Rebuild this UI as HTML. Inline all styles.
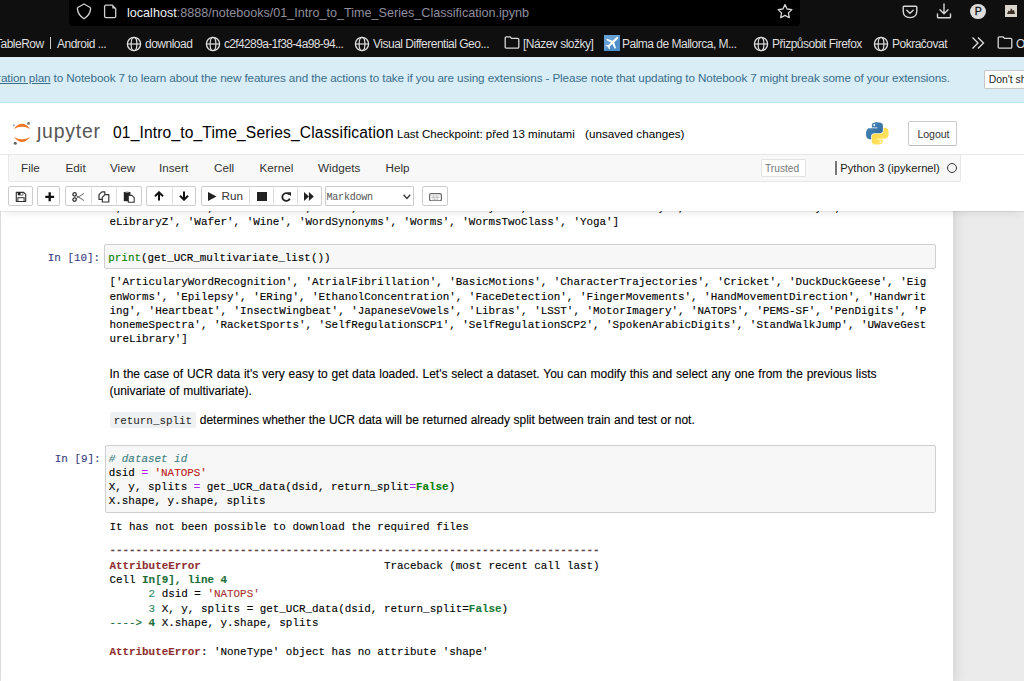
<!DOCTYPE html>
<html><head><meta charset="utf-8">
<style>
*{box-sizing:border-box;margin:0;padding:0}
html,body{width:1024px;height:681px;overflow:hidden;background:#ebebeb;font-family:"Liberation Sans",sans-serif}
.abs{position:absolute}
#chrome{position:absolute;left:0;top:0;width:1024px;height:57px;background:#0f0f0f}
#urlbar{position:absolute;left:69px;top:0;width:731px;height:26px;background:#000;border-radius:0 0 4px 4px}
.bm{position:absolute;top:35.8px;color:#dedede;font-size:12px;white-space:nowrap;line-height:16px;letter-spacing:-0.5px}
#notif{position:absolute;left:0;top:57px;width:1024px;height:46px;background:#d9edf7;border-bottom:1px solid #bce8f1;color:#31708f;font-size:11.7px}
#header{position:absolute;left:0;top:103px;width:1024px;height:108px;background:#fff;box-shadow:0 1px 0 rgba(0,0,0,0.05),0 5px 8px -4px rgba(87,87,87,0.16);z-index:5}
#site{position:absolute;left:0;top:103px;width:1024px;height:578px;background:#ebebeb;overflow:hidden}
#nbc{position:absolute;left:1px;top:0;width:952px;height:578px;background:#fff;box-shadow:0 0 12px 1px rgba(87,87,87,0.2)}
#content{position:absolute;left:0;top:0;width:1024px;height:681px}
.mono{font-family:"Liberation Mono",monospace;font-size:10.9px;line-height:14.3px;white-space:pre;color:#000}
.t{position:absolute;white-space:nowrap}
.inbox{border:1px solid #cfcfcf;border-radius:2px;background:#f7f7f7}
.prompt{color:#363d80}
.cm-b{color:#008000}.cm-k{color:#008000;font-weight:bold}.cm-c{color:#408080;font-style:italic}.cm-s{color:#ba2121}.cm-o{color:#aa22ff}
.a-s{color:#a8322f}.a-k{color:#1a7a36;font-weight:bold}
.a-r{color:#8e2f2f;font-weight:bold}.a-d{color:#5e4242;font-weight:bold;position:relative;top:-1.5px}.a-g{color:#1a6e36;font-weight:bold}.a-g2{color:#2a8a60}
.t.mono{white-space:pre;-webkit-text-stroke:0.12px currentColor}
.md{font-size:12px;line-height:16.5px;color:#000;word-spacing:0.5px;-webkit-text-stroke:0.1px #000}

.btn{position:absolute;top:83px;height:20px;border:1px solid #ccc;border-radius:2px;background:#fff}
.sep{position:absolute;top:83px;width:1px;height:20px;background:#ddd}
.menu{top:58px;font-size:11.7px;line-height:14px;color:#333}
</style></head>
<body>
<div id="chrome">
  <div id="urlbar"></div>
  <svg class="abs" style="left:76px;top:3px" width="16" height="17" viewBox="0 0 16 17"><path d="M8 1 L13.8 4.2 Q14.6 4.7 14.6 5.6 Q14.3 11.5 8 15.8 Q1.7 11.5 1.4 5.6 Q1.4 4.7 2.2 4.2 Z" fill="none" stroke="#d0d0d0" stroke-width="1.3" stroke-linejoin="round"/></svg>
  <svg class="abs" style="left:103px;top:4px" width="15" height="15" viewBox="0 0 15 15"><path d="M3 1.2 L9.3 1.2 L12.7 4.6 L12.7 12.2 Q12.7 13.6 11.3 13.6 L3 13.6 Q1.6 13.6 1.6 12.2 L1.6 2.6 Q1.6 1.2 3 1.2 Z" fill="none" stroke="#d0d0d0" stroke-width="1.3" stroke-linejoin="round"/><path d="M9.3 1.2 L9.3 4.6 L12.7 4.6 Z" fill="#d0d0d0"/></svg>
  <div class="t" id="url" style="left:127px;top:3.7px;font-size:12.6px;line-height:18px;color:#8f8f9d"><span style="color:#f0f0f4">localhost</span>:8888/notebooks/01_Intro_to_Time_Series_Classification.ipynb</div>
  <svg class="abs" style="left:776px;top:3px" width="18" height="17" viewBox="0 0 18 17"><path d="M9 1.6 L11.1 6 L15.9 6.6 L12.4 9.9 L13.3 14.7 L9 12.4 L4.7 14.7 L5.6 9.9 L2.1 6.6 L6.9 6 Z" fill="none" stroke="#d8d8d8" stroke-width="1.3" stroke-linejoin="round"/></svg>
  <svg class="abs" style="left:902px;top:5px" width="16" height="14" viewBox="0 0 16 14"><path d="M2.2 1.2 L13.8 1.2 Q14.8 1.2 14.8 2.2 L14.8 6 Q14.8 12.6 8 12.6 Q1.2 12.6 1.2 6 L1.2 2.2 Q1.2 1.2 2.2 1.2 Z" fill="none" stroke="#d8d8d8" stroke-width="1.4"/><path d="M4.8 5.3 L8 8.3 L11.2 5.3" fill="none" stroke="#d8d8d8" stroke-width="1.4" stroke-linecap="round" stroke-linejoin="round"/></svg>
  <svg class="abs" style="left:936px;top:3px" width="16" height="16" viewBox="0 0 16 16"><path d="M8 1 L8 10.5 M4 6.8 L8 10.8 L12 6.8" fill="none" stroke="#d8d8d8" stroke-width="1.4" stroke-linecap="round" stroke-linejoin="round"/><path d="M1.5 11 L1.5 14 Q1.5 14.8 2.3 14.8 L13.7 14.8 Q14.5 14.8 14.5 14 L14.5 11" fill="none" stroke="#d8d8d8" stroke-width="1.4" stroke-linecap="round"/></svg>
  <div class="abs" style="left:970px;top:3.5px;width:15.5px;height:15.5px;border-radius:50%;background:#dcdcdc"></div>
  <div class="t" style="left:970.5px;top:4px;width:15.5px;text-align:center;font-size:10.5px;line-height:15.5px;color:#111;-webkit-text-stroke:0.3px #111">P</div>
  <div class="abs" style="left:1005px;top:5px;width:12px;height:12px;background:#d9d4cc"></div>
  <svg class="abs" style="left:1005px;top:5px" width="12" height="12" viewBox="0 0 12 12"><path d="M2 9 L3.5 5.5 L5 6.5 L6 3 L7.5 5.5 L9 5 L10 9 Z" fill="#3a2d24"/></svg>
<div class="bm" style="left:-5px" id="bm0">TableRow</div>
<div class="abs" style="left:49.5px;top:37px;width:1.2px;height:12px;background:#cfcfcf"></div>
<div class="bm" id="bm1" style="left:57px">Android ...</div>
<svg class="abs" style="left:126px;top:35.5px" width="16" height="16" viewBox="0 0 16 16"><circle cx="8" cy="8" r="6.6" fill="none" stroke="#e0e0e0" stroke-width="1.3"/><ellipse cx="8" cy="8" rx="2.9" ry="6.6" fill="none" stroke="#e0e0e0" stroke-width="1.2"/><path d="M1.5 8 L14.5 8" stroke="#e0e0e0" stroke-width="1.2"/></svg><div class="bm" id="bm2" style="left:145px">download</div>
<svg class="abs" style="left:205px;top:35.5px" width="16" height="16" viewBox="0 0 16 16"><circle cx="8" cy="8" r="6.6" fill="none" stroke="#e0e0e0" stroke-width="1.3"/><ellipse cx="8" cy="8" rx="2.9" ry="6.6" fill="none" stroke="#e0e0e0" stroke-width="1.2"/><path d="M1.5 8 L14.5 8" stroke="#e0e0e0" stroke-width="1.2"/></svg><div class="bm" id="bm3" style="left:224px;letter-spacing:-0.65px">c2f4289a-1f38-4a98-94...</div>
<svg class="abs" style="left:354px;top:35.5px" width="16" height="16" viewBox="0 0 16 16"><circle cx="8" cy="8" r="6.6" fill="none" stroke="#e0e0e0" stroke-width="1.3"/><ellipse cx="8" cy="8" rx="2.9" ry="6.6" fill="none" stroke="#e0e0e0" stroke-width="1.2"/><path d="M1.5 8 L14.5 8" stroke="#e0e0e0" stroke-width="1.2"/></svg><div class="bm" id="bm4" style="left:373px">Visual Differential Geo...</div>
<svg class="abs" style="left:504px;top:35px" width="16" height="15" viewBox="0 0 16 15"><path d="M1.2 3 Q1.2 1.8 2.4 1.8 L6 1.8 L7.5 3.4 L13.6 3.4 Q14.8 3.4 14.8 4.6 L14.8 12 Q14.8 13.2 13.6 13.2 L2.4 13.2 Q1.2 13.2 1.2 12 Z" fill="none" stroke="#d8d8d8" stroke-width="1.3" stroke-linejoin="round"/></svg><div class="bm" id="bm5" style="left:523px">[Název složky]</div>
<svg class="abs" style="left:603.5px;top:34.5px" width="16" height="16" viewBox="0 0 16 16"><rect x="0" y="0" width="16" height="16" fill="#4f8fc9"/><path d="M0 0 L16 0 L0 16 Z" fill="#7ab2e0" opacity="0.5"/><path d="M13.5 2 Q15 2.2 14 3.8 L10.2 7.4 L12 13 L10.8 13.8 L8.3 9 L5.6 11.4 L6 13.5 L5 14.2 L3.9 11.8 L1.6 10.8 L2.3 9.9 L4.4 10.2 L7 7.6 L2.2 5 L3 3.8 L8.6 5.8 L12.2 2.4 Q12.8 1.8 13.5 2 Z" fill="#fff"/></svg><div class="bm" id="bm6" style="left:622px">Palma de Mallorca, M...</div>
<svg class="abs" style="left:753px;top:35.5px" width="16" height="16" viewBox="0 0 16 16"><circle cx="8" cy="8" r="6.6" fill="none" stroke="#e0e0e0" stroke-width="1.3"/><ellipse cx="8" cy="8" rx="2.9" ry="6.6" fill="none" stroke="#e0e0e0" stroke-width="1.2"/><path d="M1.5 8 L14.5 8" stroke="#e0e0e0" stroke-width="1.2"/></svg><div class="bm" id="bm7" style="left:772px">Přizpůsobit Firefox</div>
<svg class="abs" style="left:873px;top:35.5px" width="16" height="16" viewBox="0 0 16 16"><circle cx="8" cy="8" r="6.6" fill="none" stroke="#e0e0e0" stroke-width="1.3"/><ellipse cx="8" cy="8" rx="2.9" ry="6.6" fill="none" stroke="#e0e0e0" stroke-width="1.2"/><path d="M1.5 8 L14.5 8" stroke="#e0e0e0" stroke-width="1.2"/></svg><div class="bm" id="bm8" style="left:892px">Pokračovat</div>
<svg class="abs" style="left:970px;top:36px" width="16" height="14" viewBox="0 0 16 14"><path d="M2.5 1.5 L8 7 L2.5 12.5 M8 1.5 L13.5 7 L8 12.5" fill="none" stroke="#e0e0e0" stroke-width="1.3"/></svg><svg class="abs" style="left:997px;top:35px" width="16" height="15" viewBox="0 0 16 15"><path d="M1.2 3 Q1.2 1.8 2.4 1.8 L6 1.8 L7.5 3.4 L13.6 3.4 Q14.8 3.4 14.8 4.6 L14.8 12 Q14.8 13.2 13.6 13.2 L2.4 13.2 Q1.2 13.2 1.2 12 Z" fill="none" stroke="#d8d8d8" stroke-width="1.3" stroke-linejoin="round"/></svg><div class="bm" id="bm9" style="left:1016px">O</div>
</div>
<div id="notif">
  <div class="t" id="ntext" style="right:74px;top:14px;line-height:14px;letter-spacing:-0.112px;color:#3a6f8c"><span style="text-decoration:underline">migration plan</span> to Notebook 7 to learn about the new features and the actions to take if you are using extensions - Please note that updating to Notebook 7 might break some of your extensions.</div>
  <div class="abs" style="left:984px;top:13px;width:60px;height:18.5px;background:#fff;border:1px solid #c8c8c8;border-radius:1px"></div>
  <div class="t" style="left:988.8px;top:16.1px;font-size:10.4px;line-height:14px;color:#222">Don't show</div>
</div>
<div id="header">
  <svg class="abs" style="left:12px;top:19px" width="20" height="24" viewBox="0 0 20 24">
<path d="M1.8 6.9 Q10 -3.2 18.2 6.9 Q10 2.4 1.8 6.9 Z" fill="#f37726"/>
<path d="M1.8 15 Q10 25 18.2 15 Q10 19.6 1.8 15 Z" fill="#f37726"/>
<circle cx="16.5" cy="1.4" r="1.4" fill="#767677"/>
<circle cx="1.9" cy="3.3" r="0.95" fill="#9e9e9e"/>
<circle cx="3.3" cy="21.3" r="1.5" fill="#616262"/>
</svg>
  <div class="t" id="jtext" style="left:37px;top:16px;font-size:19.4px;line-height:24px;color:#555;letter-spacing:0.8px">ȷupyter</div>
  <div class="t" id="title" style="left:113px;top:20px;font-size:15.6px;line-height:20px;color:#000;letter-spacing:0.15px">01_Intro_to_Time_Series_Classification</div>
  <div class="t" id="ckpt" style="left:397px;top:24.2px;font-size:11.5px;line-height:14px;color:#000">Last Checkpoint: před 13 minutami</div>
  <div class="t" id="unsaved" style="left:585px;top:24.1px;font-size:11.7px;line-height:14px;color:#000">(unsaved changes)</div>
  <svg class="abs" style="left:866.2px;top:19px" width="22.6" height="22.8" viewBox="0 0 110 110">
    <defs>
      <linearGradient id="pyb" x1="0" y1="0" x2="1" y2="1"><stop offset="0" stop-color="#4b8bc0"/><stop offset="1" stop-color="#2d6494"/></linearGradient>
      <linearGradient id="pyy" x1="0" y1="0" x2="1" y2="1"><stop offset="0" stop-color="#ffd43b"/><stop offset="1" stop-color="#ffe873"/></linearGradient>
    </defs>
    <path fill="url(#pyb)" d="M54.9 1C26.9 1 28.6 13.2 28.6 13.2l.03 12.6h26.7v3.8H18C18 29.6 0 27.5 0 55.8s15.7 27.3 15.7 27.3h9.4V69.9s-.5-15.7 15.5-15.7h26.6s15 .2 15-14.5V15.3S84.4 1 54.9 1zM40.1 9.5a4.8 4.8 0 1 1 0 9.6 4.8 4.8 0 0 1 0-9.6z"/>
    <path fill="url(#pyy)" d="M55.7 109.5c28 0 26.3-12.2 26.3-12.2l-.03-12.6H55.3v-3.8h37.3s18 2 18-26.3-15.7-27.3-15.7-27.3h-9.4v13.2s.5 15.7-15.5 15.7H43.4s-15-.2-15 14.5v24.4s-2.3 14.4 27.2 14.4zm14.8-8.5a4.8 4.8 0 1 1 0-9.6 4.8 4.8 0 0 1 0 9.6z"/>
  </svg>
  <div class="abs" style="left:908.3px;top:18.3px;width:48.4px;height:24.8px;border:1px solid #ccc;border-bottom-color:#bbb;border-radius:2px;background:#fff"></div>
  <div class="t" id="logout" style="left:917.5px;top:24px;font-size:10.6px;line-height:14px;color:#333;letter-spacing:-0.1px">Logout</div>
  <div class="abs" style="left:0;top:51px;width:1024px;height:1px;background:#e7e7e7"></div>
  <div class="abs" id="menubar" style="left:8px;top:51px;width:953px;height:28px;background:#f8f8f8;border:1px solid #e7e7e7;border-radius:2px"></div>
  <div class="t menu" style="left:21px">File</div>
  <div class="t menu" style="left:65.5px">Edit</div>
  <div class="t menu" style="left:110px">View</div>
  <div class="t menu" style="left:159px">Insert</div>
  <div class="t menu" style="left:214px">Cell</div>
  <div class="t menu" style="left:259.5px">Kernel</div>
  <div class="t menu" style="left:318px">Widgets</div>
  <div class="t menu" style="left:385.5px">Help</div>

  <div class="btn" style="left:8.2px;width:24.6px"></div>
  <svg class="abs" style="left:15px;top:88px" width="12" height="12" viewBox="0 0 12 12"><path d="M1.3 1.3 L8.7 1.3 L10.7 3.3 L10.7 10.5 L1.3 10.5 Z" fill="none" stroke="#333" stroke-width="1.15" stroke-linejoin="round"/><rect x="2.8" y="1.3" width="2.8" height="3" fill="#222"/><path d="M5.6 4.2 L8 4.2 L8 1.3" fill="none" stroke="#555" stroke-width="0.8"/><rect x="2.9" y="6.7" width="6.2" height="3.8" fill="none" stroke="#333" stroke-width="1"/></svg>
  <div class="btn" style="left:37.2px;width:23.2px"></div>
  <svg class="abs" style="left:44.5px;top:88.5px" width="10" height="10" viewBox="0 0 10 10"><path d="M4.7 0.3 L4.7 9.3 M0.3 4.8 L9.1 4.8" stroke="#111" stroke-width="2.3"/></svg>
  <div class="btn" style="left:65.2px;width:76.5px"></div>
  <div class="sep" style="left:91px"></div>
  <div class="sep" style="left:116.3px"></div>
  <svg class="abs" style="left:72px;top:88.5px" width="13" height="10" viewBox="0 0 13 10"><circle cx="2.6" cy="2.4" r="1.7" fill="none" stroke="#333" stroke-width="1.3"/><circle cx="2.6" cy="7.6" r="1.7" fill="none" stroke="#333" stroke-width="1.3"/><path d="M4 3.4 L12 8.6 M4 6.6 L12 1.4" stroke="#555" stroke-width="0.9"/></svg>
  <svg class="abs" style="left:97.5px;top:87.5px" width="12" height="12" viewBox="0 0 12 12"><path d="M3.8 0.9 L6.8 0.9 L6.8 3.6 M3.8 0.9 L1 3.7 L1 8.4 L4.3 8.4" fill="none" stroke="#333" stroke-width="1.2" stroke-linejoin="round"/><path d="M7 3.6 L10.8 3.6 L10.8 11 L4.3 11 L4.3 6.3 Z" fill="#fff" stroke="#333" stroke-width="1.2" stroke-linejoin="round"/></svg>
  <svg class="abs" style="left:122.5px;top:87.5px" width="12" height="12" viewBox="0 0 12 12"><rect x="0.8" y="1" width="6.6" height="9.2" fill="#222"/><rect x="2.5" y="0.4" width="3.2" height="1.3" fill="#aaa"/><path d="M5.3 4.4 L9 4.4 L11.2 6.6 L11.2 11.3 L5.3 11.3 Z" fill="#fff" stroke="#333" stroke-width="1.1" stroke-linejoin="round"/></svg>
  <div class="btn" style="left:146.2px;width:49.4px"></div>
  <div class="sep" style="left:171.5px"></div>
  <svg class="abs" style="left:153.5px;top:88.3px" width="10" height="10" viewBox="0 0 10 10"><path d="M5 9.6 L5 1.6 M1 5.3 L5 1.3 L9 5.3" fill="none" stroke="#111" stroke-width="2"/></svg>
  <svg class="abs" style="left:178.5px;top:88.3px" width="10" height="10" viewBox="0 0 10 10"><path d="M5 0.4 L5 8.4 M1 4.7 L5 8.7 L9 4.7" fill="none" stroke="#111" stroke-width="2"/></svg>
  <div class="btn" style="left:200.5px;width:121px"></div>
  <div class="sep" style="left:249.2px"></div>
  <div class="sep" style="left:273.4px"></div>
  <div class="sep" style="left:297.3px"></div>
  <svg class="abs" style="left:207.7px;top:89px" width="9" height="9" viewBox="0 0 9 9"><path d="M0 0 L8.5 4.5 L0 9 Z" fill="#222"/></svg>
  <div class="t" id="run" style="left:221.5px;top:86.4px;font-size:11.7px;line-height:14px;color:#333">Run</div>
  <div class="abs" style="left:257px;top:89px;width:9.8px;height:9px;background:#222"></div>
  <svg class="abs" style="left:280.5px;top:88.5px" width="10.5" height="10" viewBox="0 0 10.5 10"><path d="M8.2 2.5 A3.9 3.9 0 1 0 8.8 6.6" fill="none" stroke="#222" stroke-width="1.8"/><path d="M6 0.3 L10.2 0.3 L10.2 4.5 Z" fill="#222"/></svg>
  <svg class="abs" style="left:304.4px;top:89px" width="10" height="9" viewBox="0 0 10 9"><path d="M0 0 L4.9 4.5 L0 9 Z M4.9 0 L9.8 4.5 L4.9 9 Z" fill="#222"/></svg>
  <div class="abs" style="left:325.2px;top:83.2px;width:88.8px;height:19.4px;border:1px solid #ccc;border-radius:1px;background:#fff"></div>
  <div class="t" id="mkd" style="left:326.5px;top:87.8px;font-family:'Liberation Mono',monospace;font-size:10px;line-height:14px;color:#555;letter-spacing:-0.2px">Markdown</div>
  <svg class="abs" style="left:402.5px;top:90.5px" width="8" height="6" viewBox="0 0 8 6"><path d="M0.6 0.8 L3.9 4.5 L7.2 0.8" fill="none" stroke="#333" stroke-width="1.3"/></svg>
  <div class="btn" style="left:422.3px;width:26.2px"></div>
  <svg class="abs" style="left:428.8px;top:89.8px" width="13" height="8.5" viewBox="0 0 13 8.5"><rect x="0.6" y="0.6" width="11.8" height="7.3" rx="1.6" fill="none" stroke="#666" stroke-width="1.2"/><path d="M2.6 3 L10.4 3 M2.6 4.6 L10.4 4.6 M3.6 6.2 L9.4 6.2" stroke="#999" stroke-width="0.9" stroke-dasharray="1 0.4"/></svg>
  <div class="abs" style="left:761px;top:55.5px;width:45px;height:18.5px;border:1px solid #e3e3e3;background:#fff;border-radius:1px"></div>
  <div class="t" id="trusted" style="left:765px;top:58.6px;font-size:10.2px;line-height:14px;color:#777">Trusted</div>
  <div class="abs" style="left:835.2px;top:57.5px;width:2px;height:14px;background:#777"></div>
  <div class="t" id="pyk" style="left:840.3px;top:58.2px;font-size:11.2px;line-height:14px;color:#222">Python 3 (ipykernel)</div>
  <div class="abs" style="left:946.7px;top:59.6px;width:10.2px;height:10.2px;border:1.9px solid #333;border-radius:50%"></div>
</div>
<div id="site"><div id="nbc"></div></div>
<div id="content">
<div class="t mono" id="prevline" style="left:109.4px;top:201px">', 'TwoLeadECG', 'TwoPatterns', 'UMD', 'UWaveGestureLibraryAll', 'UWaveGestureLibraryX', 'UWaveGestureLibraryY', 'UWaveGestur
eLibraryZ', 'Wafer', 'Wine', 'WordSynonyms', 'Worms', 'WormsTwoClass', 'Yoga']</div>
<div class="abs inbox" style="left:104px;top:243.5px;width:831.6px;height:25.2px"></div>
<div class="t mono prompt" id="p10" style="left:47.8px;top:250.5px">In [10]:</div>
<div class="t mono" id="c10" style="left:108.3px;top:250.5px"><span class="cm-b">print</span>(get_UCR_multivariate_list())</div>
<div class="t mono" id="o10" style="left:109.4px;top:275.3px">['ArticularyWordRecognition', 'AtrialFibrillation', 'BasicMotions', 'CharacterTrajectories', 'Cricket', 'DuckDuckGeese', 'Eig
enWorms', 'Epilepsy', 'ERing', 'EthanolConcentration', 'FaceDetection', 'FingerMovements', 'HandMovementDirection', 'Handwrit
ing', 'Heartbeat', 'InsectWingbeat', 'JapaneseVowels', 'Libras', 'LSST', 'MotorImagery', 'NATOPS', 'PEMS-SF', 'PenDigits', 'P
honemeSpectra', 'RacketSports', 'SelfRegulationSCP1', 'SelfRegulationSCP2', 'SpokenArabicDigits', 'StandWalkJump', 'UWaveGest
ureLibrary']</div>
<div class="t md" id="md1" style="left:109.5px;top:366.3px">In the case of UCR data it's very easy to get data loaded. Let's select a dataset. You can modify this and select any one from the previous lists<br>(univariate of multivariate).</div>
<div class="abs" style="left:109.7px;top:412.3px;width:86px;height:15.7px;background:#eff0f1;border-radius:2px"></div>
<div class="t mono" id="rs" style="left:113.7px;top:414px;-webkit-text-stroke:0;color:#222">return_split</div>
<div class="t md" id="md2" style="left:199.8px;top:411.6px;word-spacing:0.3px;letter-spacing:-0.02px">determines whether the UCR data will be returned already split between train and test or not.</div>
<div class="abs inbox" style="left:105.3px;top:445px;width:830.3px;height:67.5px"></div>
<div class="t mono prompt" id="p9" style="left:54.8px;top:451.5px">In [9]:</div>
<div class="t mono" id="c9" style="left:108.75px;top:451.5px"><span class="cm-c"># dataset id</span>
dsid <span class="cm-o">=</span> <span class="cm-s">'NATOPS'</span>
X, y, splits <span class="cm-o">=</span> get_UCR_data(dsid, return_split<span class="cm-o">=</span><span class="cm-k">False</span>)
X.shape, y.shape, splits</div>
<div class="t mono" id="o9a" style="left:109.4px;top:520px">It has not been possible to download the required files</div>
<div class="t mono" id="o9b" style="left:109.4px;top:544.5px"><span class="a-d">---------------------------------------------------------------------------</span>
<span class="a-r">AttributeError</span>                            Traceback (most recent call last)
Cell <span class="a-g">In[9], line 4</span>
<span class="a-g2">      2</span> dsid = <span class="a-s">'NATOPS'</span>
<span class="a-g2">      3</span> X, y, splits = get_UCR_data(dsid, return_split=<span class="a-k">False</span>)
<span class="a-g" style="font-weight:normal">----&gt; </span><span class="a-g">4</span> X.shape, y.shape, splits

<span class="a-r">AttributeError</span>: 'NoneType' object has no attribute 'shape'</div>
</div>

</body></html>
